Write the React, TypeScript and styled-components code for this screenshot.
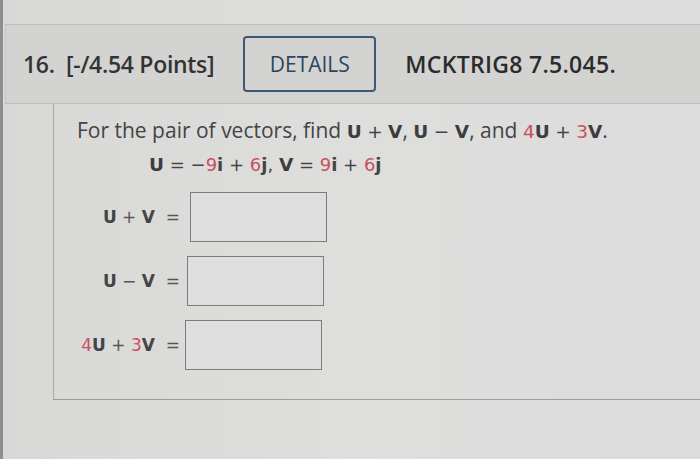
import { createGlobalStyle, styled } from "styled-components";

const GlobalStyle = createGlobalStyle`
  html, body {
    margin: 0;
    padding: 0;
    background: #dcdcdb;
  }
  body {
    font-family: "Open Sans", "Liberation Sans", sans-serif;
    color: #3a3a3a;
  }
`;

const Page = styled.div`
  width: 700px;
  height: 459px;
  overflow: hidden;
  box-sizing: border-box;
  padding-top: 24px;
  border-left: 3px solid #8e8e8e;
  background: linear-gradient(90deg, #d8d8d7 0%, #dededd 50%, #dcdcdc 100%);
`;

const HeaderBar = styled.div`
  display: flex;
  align-items: center;
  height: 80px;
  box-sizing: border-box;
  margin-left: 2px;
  padding-left: 17px;
  gap: 29px;
  background: #d3d3d2;
  border-top: 1px solid #bdbdbc;
  border-left: 1px solid #c4c4c3;
  border-bottom: 1px solid #bdbdbc;
`;

const Points = styled.span`
  font-size: 23px;
  font-weight: 600;
  color: #333;
  letter-spacing: -0.3px;
`;

const DetailsButton = styled.button`
  width: 133px;
  height: 56px;
  padding: 0;
  border: 2px solid #3f5874;
  border-radius: 4px;
  background: transparent;
  font-family: "Open Sans", "Liberation Sans", sans-serif;
  font-size: 21px;
  color: #2c4561;
`;

const Code = styled.span`
  font-size: 23px;
  font-weight: 600;
  color: #2b2b2b;
  letter-spacing: 0.3px;
`;

const Panel = styled.div`
  margin-left: 50px;
  height: 296px;
  box-sizing: border-box;
  border-left: 1px solid #a9a9a8;
  border-bottom: 1px solid #9c9c9b;
  padding: 12px 0 0 23px;
`;

const Prompt = styled.p`
  margin: 0;
  font-size: 21px;
  color: #444;
`;

const Math = styled.span`
  font-family: "DejaVu Sans", Verdana, sans-serif;
  font-size: 18.5px;
`;

const B = styled.b`
  font-family: "DejaVu Sans", Verdana, sans-serif;
  font-weight: 700;
  color: #3d3d3d;
  font-size: 18.5px;
`;

const Red = styled.span`
  color: #c9505f;
`;

const Given = styled.div`
  margin: 10px 0 0 72px;
  font-family: "DejaVu Sans", Verdana, sans-serif;
  font-size: 18px;
  color: #444;
`;

const Answers = styled.div`
  display: grid;
  grid-template-columns: 103px 137px;
  column-gap: 10px;
  row-gap: 14px;
  margin: 17px 0 0 0;
  width: fit-content;
`;

const Label = styled.div`
  height: 50px;
  line-height: 50px;
  text-align: right;
  font-family: "DejaVu Sans", Verdana, sans-serif;
  font-size: 17px;
  color: #444;
  white-space: pre;
`;

const AnswerBox = styled.input<{ $shift: number }>`
  width: 137px;
  height: 50px;
  box-sizing: border-box;
  margin-left: ${(p) => p.$shift}px;
  border: 1px solid #7c7c7b;
  background: #dedede;
`;

const Op = styled.span`
  font-weight: 400;
  color: #555;
`;

export default function App() {
  return (
    <>
      <GlobalStyle />
      <Page>
        <HeaderBar>
          <Points>16.&nbsp; [-/4.54 Points]</Points>
          <DetailsButton>DETAILS</DetailsButton>
          <Code>MCKTRIG8 7.5.045.</Code>
        </HeaderBar>
        <Panel>
          <Prompt>
            For the pair of vectors, find <B>U</B> <Math>+</Math> <B>V</B>, <B>U</B>{" "}
            <Math>−</Math> <B>V</B>, and <Math><Red>4</Red></Math><B>U</B> <Math>+</Math>{" "}
            <Math><Red>3</Red></Math><B>V</B>.
          </Prompt>
          <Given>
            <B>U</B> = −<Red>9</Red><b>i</b> + <Red>6</Red><b>j</b>, <B>V</B> ={" "}
            <Red>9</Red><b>i</b> + <Red>6</Red><b>j</b>
          </Given>
          <Answers>
            <Label>
              <b>U</b> <Op>+</Op> <b>V</b>  <Op>=</Op>
            </Label>
            <AnswerBox $shift={0} />
            <Label>
              <b>U</b> <Op>−</Op> <b>V</b>  <Op>=</Op>
            </Label>
            <AnswerBox $shift={-3} />
            <Label>
              <Red>4</Red><b>U</b> <Op>+</Op> <Red>3</Red><b>V</b>  <Op>=</Op>
            </Label>
            <AnswerBox $shift={-5} />
          </Answers>
        </Panel>
      </Page>
    </>
  );
}
